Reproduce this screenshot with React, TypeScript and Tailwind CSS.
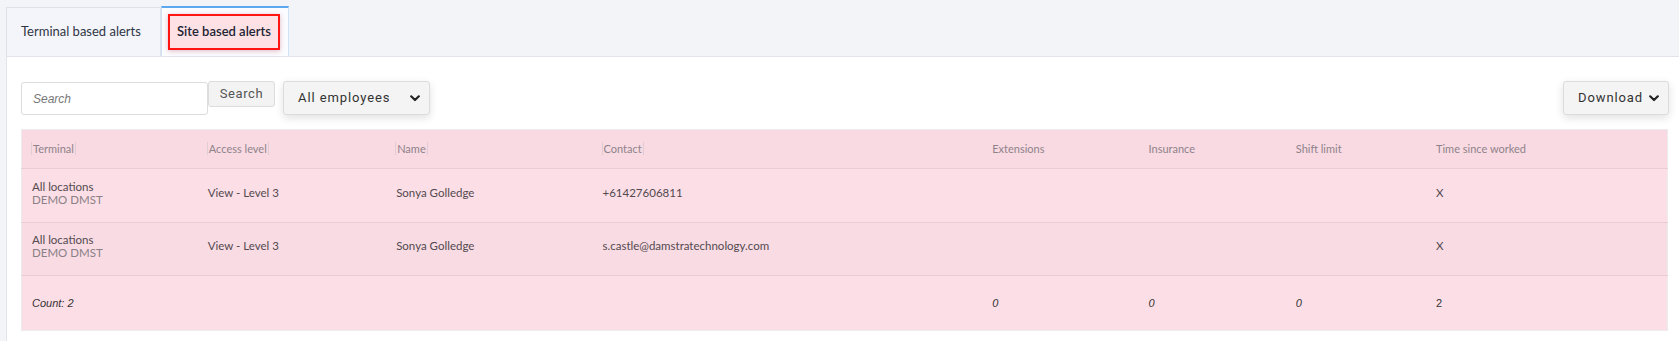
import React from "react";

const Chevron = () => (
  <svg width="10" height="7" viewBox="0 0 10 7" className="shrink-0">
    <path d="M1.2 1.3 L5 5 L8.8 1.3" fill="none" stroke="#222" strokeWidth="2.2" strokeLinecap="round" strokeLinejoin="round" />
  </svg>
);

const cols = [177, 188, 206, 390, 156, 147, 140, 239];

const HeadLabel = ({ children, bars }: { children: React.ReactNode; bars?: boolean }) =>
  bars ? (
    <span className="border-l border-r border-[#e0cdd3] px-[1px]">{children}</span>
  ) : (
    <span>{children}</span>
  );

export default function App() {
  const rows = [
    { contact: "+61427606811" },
    { contact: "s.castle@damstratechnology.com" },
  ];
  return (
    <div className="w-[1679px] h-[341px] bg-[#f3f4f8] overflow-hidden font-['Lato',sans-serif] text-[#444]">
      {/* Tabs */}
      <div className="flex items-end h-[56px] pl-[6px]">
        <div className="w-[155px] h-[49px] border border-b-0 border-[#dfe1e8] bg-[#f4f5fa] flex items-center pl-[14px] pb-[1px] text-[13px] text-[#2f3644]">
          Terminal based alerts
        </div>
        <div className="w-[128px] h-[50px] border-t-2 border-t-[#5ba8ef] border-x border-x-[#cfe2f7] bg-[#fbfcff] flex items-start pl-[6px] pt-[6px]">
          <div className="w-[112px] h-[36px] border-2 border-[#ff1414] bg-[#fde1e5] shadow-[0_1px_5px_rgba(180,60,80,0.35)] flex items-center pl-[7px] text-[13px] font-semibold text-[#1d2433]">
            Site based alerts
          </div>
        </div>
      </div>

      {/* Panel */}
      <div className="ml-[6px] h-[285px] bg-white border-t border-l border-[#e2e4ea] pl-[14px] pr-[10px] pt-[25px]">
        <div className="flex items-start justify-between h-[33px]">
          <div className="flex items-start">
            <div className="w-[187px] h-[33px] border border-[#dcdcdc] rounded-[3px] bg-white flex items-center pl-[11px] text-[12px] italic text-[#777] font-['Liberation_Sans',sans-serif]">
              Search
            </div>
            <div className="w-[67px] h-[26px] -mt-[1px] border border-[#dcdcdc] rounded-[3px] bg-[#f3f3f3] flex items-center justify-center text-[13px] tracking-[0.6px] text-[#555] font-['Roboto',sans-serif]">
              Search
            </div>
            <div className="ml-[8px] -mt-[1px] w-[147px] h-[34px] border border-[#dcdcdc] rounded-[3px] bg-[#f4f4f4] shadow-[0_3px_8px_rgba(0,0,0,0.12)] flex items-center justify-between pl-[14px] pr-[9px] text-[13px] tracking-[0.9px] text-[#333] font-['Roboto',sans-serif]">
              <span>All employees</span>
              <Chevron />
            </div>
          </div>
          <div className="-mt-[1px] w-[106px] h-[34px] border border-[#dcdcdc] rounded-[3px] bg-[#f4f4f4] shadow-[0_3px_8px_rgba(0,0,0,0.12)] flex items-center justify-between pl-[14px] pr-[9px] text-[13px] tracking-[0.9px] text-[#333] font-['Roboto',sans-serif]">
            <span>Download</span>
            <Chevron />
          </div>
        </div>

        <table className="mt-[14px] table-fixed border-collapse w-[1647px] border border-[#ececec] text-[11.5px]">
          <colgroup>
            {cols.map((w, i) => (
              <col key={i} style={{ width: w }} />
            ))}
          </colgroup>
          <thead>
            <tr className="h-[39px] bg-[#f9dae3] text-[#8e8389] text-left text-[11px]">
              <th className="font-normal pl-[9px]"><HeadLabel bars>Terminal</HeadLabel></th>
              <th className="font-normal pl-[8px]"><HeadLabel bars>Access level</HeadLabel></th>
              <th className="font-normal pl-[8px]"><HeadLabel bars>Name</HeadLabel></th>
              <th className="font-normal pl-[8px]"><HeadLabel bars>Contact</HeadLabel></th>
              <th className="font-normal pl-[8px]"><HeadLabel>Extensions</HeadLabel></th>
              <th className="font-normal pl-[8px]"><HeadLabel>Insurance</HeadLabel></th>
              <th className="font-normal pl-[8px]"><HeadLabel>Shift limit</HeadLabel></th>
              <th className="font-normal pl-[8px]"><HeadLabel>Time since worked</HeadLabel></th>
            </tr>
          </thead>
          <tbody>
            {rows.map((r, i) => (
              <tr
                key={i}
                className={`${i === 0 ? "h-[54px] bg-[#fcdee6]" : "h-[53px] bg-[#f9dbe4]"} border-t border-[#e8cdd5] text-[#524a4f]`}
              >
                <td className="pl-[10px] pb-[6px] leading-[13px]">
                  <div>All locations</div>
                  <div className="text-[#8a8085]">DEMO DMST</div>
                </td>
                <td className="pl-[9px] pb-[6px]">View - Level 3</td>
                <td className="pl-[9px] pb-[6px]">Sonya Golledge</td>
                <td className="pl-[9px] pb-[6px]">{r.contact}</td>
                <td />
                <td />
                <td />
                <td className="pl-[8px] pb-[6px]">X</td>
              </tr>
            ))}
            <tr className="h-[55px] bg-[#fcdee6] border-t border-[#e8cdd5] italic text-[#333] font-['Liberation_Sans',sans-serif] text-[11px]">
              <td className="pl-[10px]">Count: 2</td>
              <td />
              <td />
              <td />
              <td className="pl-[8px]">0</td>
              <td className="pl-[8px]">0</td>
              <td className="pl-[8px]">0</td>
              <td className="pl-[8px] not-italic">2</td>
            </tr>
          </tbody>
        </table>
      </div>
    </div>
  );
}
